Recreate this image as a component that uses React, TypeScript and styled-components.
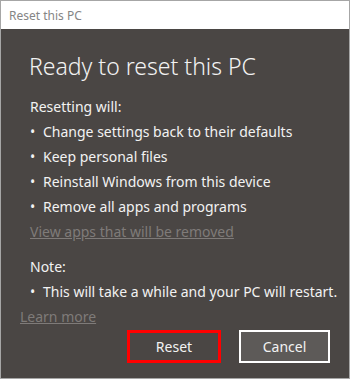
import styled, { createGlobalStyle } from "styled-components"

const GlobalStyle = createGlobalStyle`
  html, body {
    margin: 0;
    padding: 0;
    background: #ffffff;
  }
  body {
    font-family: "Noto Sans", "Open Sans", "Liberation Sans", sans-serif;
  }
`

const Window = styled.div`
  width: 348px;
  height: 377px;
  border: 1px solid #a6a6a6;
  display: flex;
  flex-direction: column;
  background: #4a4644;
  overflow: hidden;
`

const TitleBar = styled.div`
  flex-shrink: 0;
  height: 28px;
  background: #ffffff;
  display: flex;
  align-items: center;
  padding-left: 8px;
  font-size: 12px;
  color: #858585;
`

const Body = styled.div`
  flex: 1;
  display: flex;
  flex-direction: column;
  padding: 22px 19px 0 19px;
  color: #f2f2f2;
`

const Heading = styled.h1`
  margin: 0 0 13px 9px;
  font-size: 23px;
  font-weight: 300;
  line-height: 30px;
  white-space: nowrap;
`

const Section = styled.div`
  display: flex;
  flex-direction: column;
  padding-left: 10px;
  font-size: 14px;
  line-height: 25px;
  white-space: nowrap;
`

const Label = styled.div``

const Bullet = styled.div`
  display: flex;
  &::before {
    content: "•";
    flex-shrink: 0;
    width: 13px;
  }
`

const Link = styled.a<{ $spaced?: boolean }>`
  color: #7f7b79;
  text-decoration: underline;
  font-size: 14px;
  line-height: 25px;
  margin-bottom: ${(p) => (p.$spaced ? "10px" : "0")};
`

const Actions = styled.div`
  display: flex;
  justify-content: flex-end;
  gap: 18px;
  margin-top: 1px;
`

const Button = styled.button<{ $focused?: boolean }>`
  width: ${(p) => (p.$focused ? "94px" : "91px")};
  height: 33px;
  padding: 0;
  font-family: inherit;
  font-size: 14px;
  color: #f2f2f2;
  background: ${(p) => (p.$focused ? "#4a4644" : "#5d5a58")};
  border: ${(p) => (p.$focused ? "3px solid #ff0000" : "2px solid #ffffff")};
  box-sizing: border-box;
`

const App = () => {
  return (
    <>
      <GlobalStyle />
      <Window>
        <TitleBar>Reset this PC</TitleBar>
        <Body>
          <Heading>Ready to reset this PC</Heading>
          <Section>
            <Label>Resetting will:</Label>
            <Bullet>Change settings back to their defaults</Bullet>
            <Bullet>Keep personal files</Bullet>
            <Bullet>Reinstall Windows from this device</Bullet>
            <Bullet>Remove all apps and programs</Bullet>
            <Link $spaced>View apps that will be removed</Link>
            <Label>Note:</Label>
            <Bullet>This will take a while and your PC will restart.</Bullet>
          </Section>
          <Link>Learn more</Link>
          <Actions>
            <Button $focused>Reset</Button>
            <Button>Cancel</Button>
          </Actions>
        </Body>
      </Window>
    </>
  )
}

export default App
